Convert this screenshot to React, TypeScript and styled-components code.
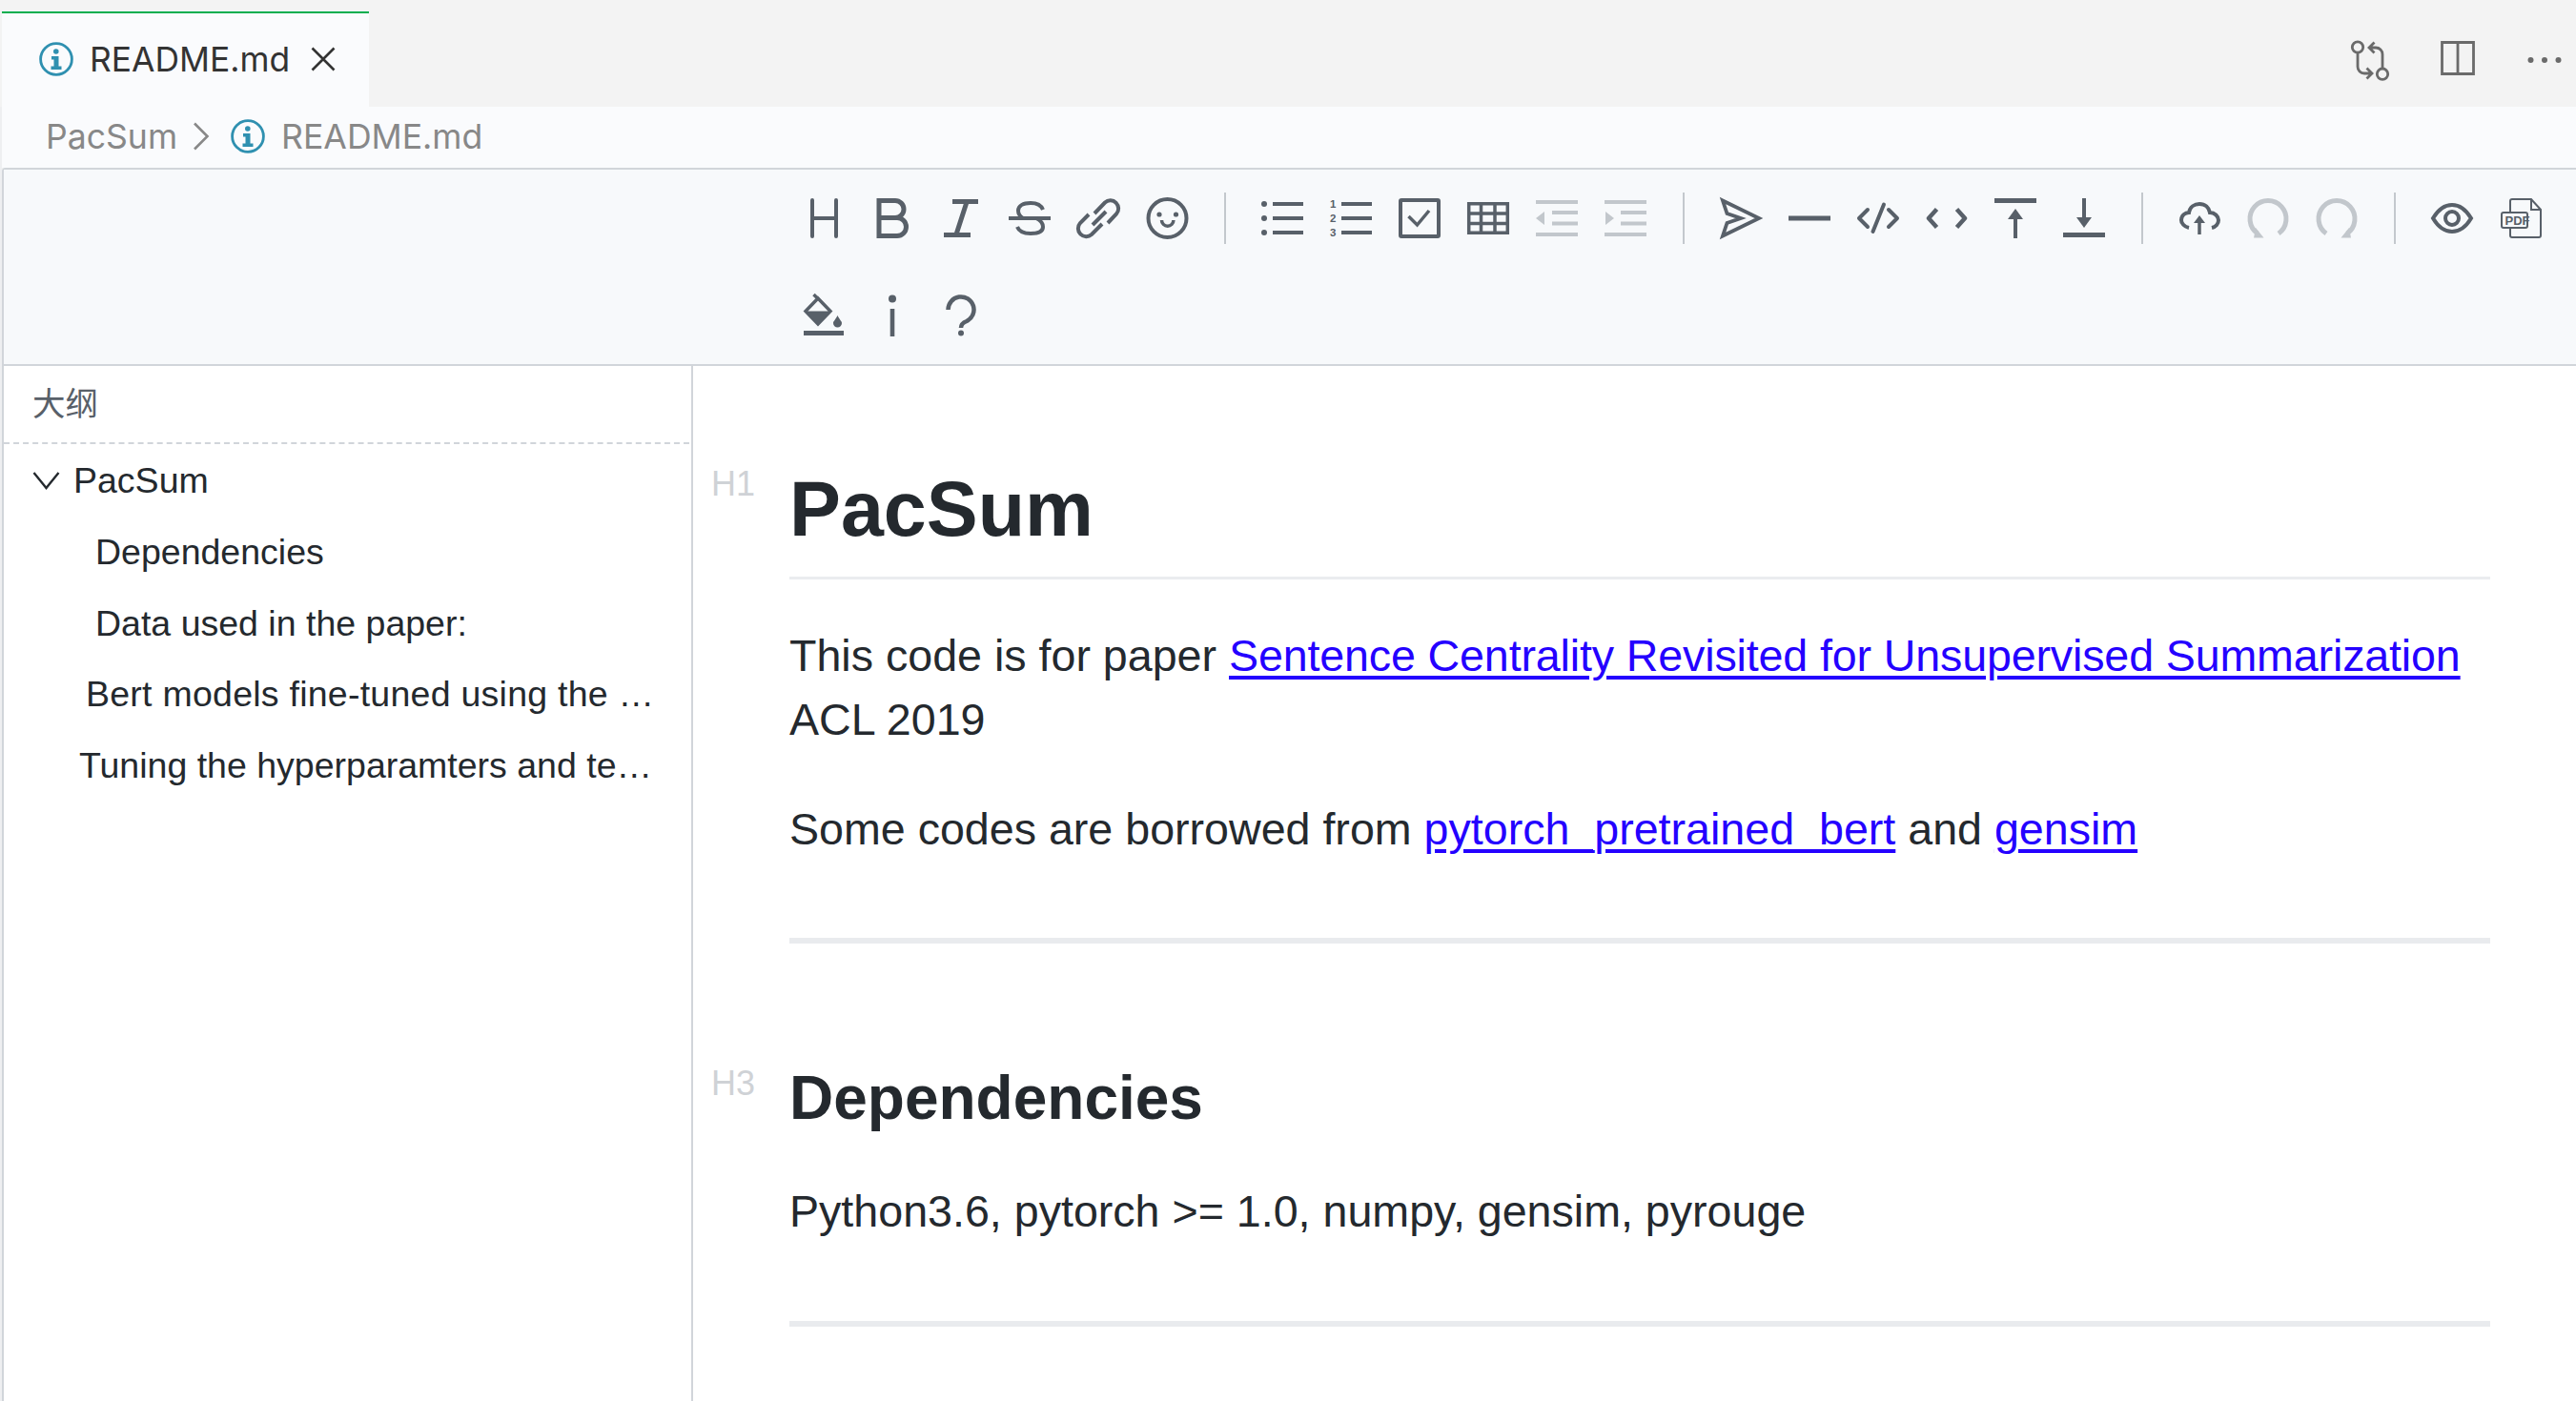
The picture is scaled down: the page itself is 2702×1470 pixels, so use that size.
import React from "react";
import styled, { createGlobalStyle } from "styled-components";

const Global = createGlobalStyle`
  html, body { margin: 0; padding: 0; width: 100%; height: 100%; overflow: hidden; background: #fff; }
  #root { height: 100%; }
  * { box-sizing: border-box; }
`;

const UI = `Inter, "Liberation Sans", sans-serif`;
const DOC = `"Liberation Sans", Arial, "Noto Sans CJK SC", sans-serif`;

const Page = styled.div`
  display: flex;
  flex-direction: column;
  height: 1470px;
  width: 2702px;
  overflow: hidden;
  background: #eeeff1;
`;
const TabBar = styled.header`
  height: 112px;
  flex: none;
  display: flex;
  justify-content: space-between;
  background: #f3f3f3;
  padding-left: 2px;
`;
const Tab = styled.div`
  width: 385px;
  margin-top: 12px;
  border-top: 2px solid #00ae4f;
  background: #fafbfd;
  display: flex;
  align-items: center;
  padding-left: 39px;
  padding-bottom: 2px;
  font: 400 35.4px ${UI};
  color: #333;
`;
const TabLabel = styled.span`
  margin-left: 17px;
`;
const TabClose = styled.svg`
  width: 26px;
  height: 26px;
  margin-left: 22px;
  color: #333;
`;
const Actions = styled.div`
  display: flex;
  align-items: center;
  gap: 47px;
  padding: 14px 11px 0 0;
  color: #6a6a6a;
`;
const ActionIcon = styled.svg`
  width: 44px;
  height: 44px;
`;
const Crumbs = styled.nav`
  height: 64px;
  flex: none;
  margin-left: 2px;
  background: #fafbfd;
  display: flex;
  align-items: center;
  padding-left: 46px;
  padding-bottom: 2px;
  font: 400 35.6px ${UI};
  color: #888;
`;
const CrumbChevron = styled.svg`
  width: 18px;
  height: 30px;
  margin: 0 22px 0 16px;
`;
const CrumbFile = styled.span`
  margin-left: 17px;
`;
const FileIcon = styled.svg`
  width: 36px;
  height: 36px;
  flex: none;
`;
const Editor = styled.main`
  flex: 1;
  min-height: 0;
  margin-left: 2px;
  display: flex;
  flex-direction: column;
  background: #fff;
  border-left: 2px solid #d1d5da;
  border-top: 2px solid #d1d5da;
  border-top-left-radius: 4px;
`;
const Toolbar = styled.div`
  height: 206px;
  flex: none;
  background: #f7f9fb;
  border-bottom: 2px solid #d1d5da;
  padding: 0 8px 0 824px;
  display: flex;
  flex-wrap: wrap;
  align-content: flex-start;
`;
const ToolButton = styled.div<{ $muted?: boolean }>`
  width: 72px;
  height: 101px;
  display: flex;
  align-items: center;
  justify-content: center;
  color: ${(p) => (p.$muted ? "#c2c7cc" : "#586069")};
`;
const ToolSeparator = styled.div`
  width: 2px;
  height: 54px;
  margin: 24px 23.5px;
  background: #c3c8cd;
`;
const Glyph = styled.svg`
  width: 44px;
  height: 44px;
  flex: none;
  overflow: visible;
`;
const Split = styled.div`
  flex: 1;
  min-height: 0;
  display: flex;
`;
const Outline = styled.aside`
  width: 723px;
  flex: none;
  border-right: 2px solid #d1d5da;
  font-family: ${DOC};
`;
const OutlineTitle = styled.div`
  height: 82px;
  margin-right: 2px;
  padding: 0 0 6px 30px;
  display: flex;
  align-items: center;
  border-bottom: 2px dashed #d1d5da;
  font: 400 34.5px "Noto Sans CJK SC", sans-serif;
  color: #586069;
`;
const OutlineList = styled.ul`
  margin: 0;
  padding: 1.5px 0 0;
  list-style: none;
  color: #24292e;
  font-size: 37.5px;
`;
const OutlineItem = styled.li<{ $indent: number; $stretch?: boolean }>`
  height: 74.5px;
  line-height: 74.5px;
  padding-left: ${(p) => p.$indent}px;
  padding-right: 37px;
  white-space: nowrap;
  overflow: hidden;
  text-overflow: ellipsis;
  letter-spacing: ${(p) => (p.$stretch ? "0.25px" : "0")};
`;
const OutlineRoot = styled.li`
  height: 74.5px;
  display: flex;
  align-items: center;
  padding-left: 30px;
`;
const OutlineCaret = styled.svg`
  width: 30px;
  height: 20px;
  margin-right: 13px;
  margin-top: -2px;
`;
const Preview = styled.article`
  flex: 1;
  min-width: 0;
  padding: 100px 90px 0 101px;
  background: #fff;
  color: #24292e;
  font: 400 46.6px/67px ${DOC};
`;
const Heading = styled.h1`
  position: relative;
  margin: 0 0 47px;
  padding-bottom: 21px;
  border-bottom: 3px solid #eaecef;
  font: 700 80.8px/100px ${DOC};
`;
const SubHeading = styled.h3`
  position: relative;
  margin: 122px 0 46px;
  font: 700 64px/80px ${DOC};
`;
const LevelTag = styled.span<{ $top: number }>`
  position: absolute;
  left: -82px;
  top: ${(p) => p.$top}px;
  font: 400 36px/40px ${DOC};
  color: #cfd2d6;
`;
const Para = styled.p`
  margin: 0 0 48px;
`;
const Link = styled.a<{ $tight?: boolean }>`
  color: #2400ff;
  text-decoration: underline;
  text-decoration-thickness: 4px;
  text-underline-offset: 5px;
  letter-spacing: ${(p) => (p.$tight ? "-0.14px" : "0")};
`;
const Rule = styled.hr<{ $gap: number }>`
  height: 6px;
  margin: ${(p) => p.$gap}px 0 0;
  border: 0;
  background: #e9ebee;
`;
const Para2 = styled(Para)`
  margin-bottom: 0;
`;

const s = { fill: "none", stroke: "currentColor" } as const;
const f = { fill: "currentColor" } as const;
const num = { fill: "currentColor", fontFamily: "Liberation Sans", fontWeight: 700, fontSize: 11.5 } as const;

const ListLines = () => (
  <g {...s} strokeWidth={4}>
    <path d="M12 7H44M12 22H44M12 37H44" />
  </g>
);

const icons: Record<string, React.ReactNode> = {
  h: <path {...s} strokeWidth={4} strokeLinecap="round" d="M10 3V41M35 3V41M10 22H35" />,
  b: <path {...s} strokeWidth={5} d="M8 3.5H25a9 9 0 0 1 0 18H8ZM8 21.5H27a9.5 9.5 0 0 1 0 19H8Z" />,
  i: <path {...s} strokeWidth={5} d="M13 4.5H40M4 39.5H32M28 5L17 39" />,
  s: (
    <g {...s} strokeWidth={4}>
      <path d="M0 22H44" />
      <path d="M36 13C34 8 29 6 23 6C15 6 10 9 10 14C10 17 12 20 15 22M29 22C33 24 36 27 36 31C36 36 30 38 23 38C16 38 11 36 9 31" />
    </g>
  ),
  link: (
    <g {...s} strokeWidth={4}>
      <path d="M18 17L29 5.5a8.5 8.5 0 0 1 12 12L32 27" />
      <path d="M26 28L15 39a8.5 8.5 0 0 1-12-12L12 18" />
      <path d="M16 29L30 15" />
    </g>
  ),
  emoji: (
    <g>
      <circle {...s} strokeWidth={4} cx="22.5" cy="22" r="20" />
      <circle {...f} cx="14" cy="18" r="2.6" />
      <circle {...f} cx="31.5" cy="18" r="2.6" />
      <path {...s} strokeWidth={3.5} d="M16.5 24a6.2 6.2 0 0 0 12.4 0" />
    </g>
  ),
  ul: (
    <g>
      <ListLines />
      <circle {...f} cx="3" cy="7" r="3" />
      <circle {...f} cx="3" cy="22" r="3" />
      <circle {...f} cx="3" cy="37" r="3" />
    </g>
  ),
  ol: (
    <g>
      <ListLines />
      <text {...num} x="0" y="11">1</text>
      <text {...num} x="0" y="26">2</text>
      <text {...num} x="0" y="41">3</text>
    </g>
  ),
  check: (
    <g {...s}>
      <rect strokeWidth={4} x="2" y="3" width="40" height="38" rx="1" />
      <path strokeWidth={3.5} d="M10.5 20L19.5 29L32 14" />
    </g>
  ),
  table: <path {...s} strokeWidth={3.5} d="M1.7 6.7H42.3V37.3H1.7ZM1.7 17H42.3M1.7 27.5H42.3M14.5 6.7V37.3M29 6.7V37.3" />,
  outdent: (
    <g>
      <path {...s} strokeWidth={4} d="M0 5H44M17 16H44M17 27.5H44M0 39H44" />
      <path {...f} d="M0 22L9 15V29Z" />
    </g>
  ),
  indent: (
    <g>
      <path {...s} strokeWidth={4} d="M0 5H44M17 16H44M17 27.5H44M0 39H44" />
      <path {...f} d="M10 22L1 15V29Z" />
    </g>
  ),
  quote: <path {...s} strokeWidth={3.8} d="M3 3.5L41 22L3 40.5L7.5 27L22 22L7.5 17Z" />,
  hr: <path {...s} strokeWidth={5} d="M0 22H44" />,
  code: <path {...s} strokeWidth={4} strokeLinecap="round" strokeLinejoin="round" d="M11 13L2 22L11 31M33 13L42 22L33 31M28 7.5L16.5 36" />,
  inline: <path {...s} strokeWidth={4.5} strokeLinejoin="round" d="M11.5 12.5L3 22L11.5 31.5M32.5 12.5L41 22L32.5 31.5" />,
  up: (
    <g>
      <path {...s} strokeWidth={5} d="M0 3.5H44" />
      <path {...s} strokeWidth={4} d="M22 21V43" />
      <path {...f} d="M22 12L30 23H14Z" />
    </g>
  ),
  down: (
    <g>
      <path {...s} strokeWidth={5} d="M0 39.5H44" />
      <path {...s} strokeWidth={4} d="M22 1V23" />
      <path {...f} d="M22 32L30 21H14Z" />
    </g>
  ),
  upload: (
    <g>
      <path {...s} strokeWidth={4} d="M11 32C6 31 3 27 3 24C3 19 7 16 11 16C12 10 17 7 22 7C28 7 32 11 33 16C38 16 42 20 42 24C42 28 39 31 35 32" />
      <path {...s} strokeWidth={3.5} d="M22 24V39" />
      <path {...f} d="M22 19L28 27H16Z" />
    </g>
  ),
  undo: (
    <g>
      <path {...s} strokeWidth={5} d="M33 38A19 19 0 1 0 11 38" />
      <path {...f} d="M9 32L17.5 42.5H7Z" />
    </g>
  ),
  redo: (
    <g>
      <path {...s} strokeWidth={5} d="M11 38A19 19 0 1 1 33 38" />
      <path {...f} d="M35 32L26.5 42.5H37Z" />
    </g>
  ),
  eye: (
    <g {...s} strokeWidth={4}>
      <path d="M2 22C8 12 15 8 22 8C29 8 36 12 42 22C36 32 29 36 22 36C15 36 8 32 2 22Z" />
      <circle cx="22" cy="22" r="7" />
    </g>
  ),
  pdf: (
    <g>
      <path {...s} strokeWidth={2} d="M11 15V4a2 2 0 0 1 2-2H33L43 13V40a2 2 0 0 1-2 2H13a2 2 0 0 1-2-2V33M33 2V13H43" />
      <rect {...s} fill="#f7f9fb" strokeWidth={2} x="2" y="16" width="27" height="16" rx="2" />
      <text fill="currentColor" fontFamily="Liberation Sans" fontSize="13" fontWeight="700" x="5.5" y="29">PDF</text>
    </g>
  ),
  fill: (
    <g>
      <path {...s} strokeWidth={3.5} d="M11.5 0L17 5.5M16 4L3 17.5L16 31L29 17.5Z" />
      <path {...f} d="M3 17.5H29L16 31Z" />
      <path {...f} d="M36.5 22C34 27 32 28 32 30a4.5 4.5 0 0 0 9 0C41 28 39 27 36.5 22Z" />
      <path {...s} strokeWidth={5} d="M1 40.5H43" />
    </g>
  ),
  info: (
    <g>
      <circle {...f} cx="22" cy="4.5" r="4" />
      <path {...s} strokeWidth={4.6} d="M22 15V44" />
    </g>
  ),
  help: (
    <g>
      <path {...s} strokeWidth={4.5} d="M8.5 16A13.5 13.5 0 1 1 28 28C24 29.5 22 31 22 35" />
      <circle {...f} cx="22" cy="40.5" r="3" />
    </g>
  ),
};

const Tool = ({ name, muted }: { name: string; muted?: boolean }) => (
  <ToolButton $muted={muted}>
    <Glyph viewBox="0 0 44 44">{icons[name]}</Glyph>
  </ToolButton>
);

const InfoGlyph = () => (
  <FileIcon viewBox="0 0 36 36" role="img" aria-label="info">
    <circle cx="18" cy="18" r="16.4" fill="none" stroke="#2f90b0" strokeWidth="2.8" />
    <circle cx="17.8" cy="10" r="2.8" fill="#2f90b0" />
    <path fill="#2f90b0" d="M13 15H20.5V25.5H23.5V29H12.5V25.5H15.5V18.5H13Z" />
  </FileIcon>
);

const Row1 = ["h", "b", "i", "s", "link", "emoji", "|", "ul", "ol", "check", "table", "outdent*", "indent*", "|", "quote", "hr", "code", "inline", "up", "down", "|", "upload", "undo*", "redo*", "|", "eye", "pdf", "fill", "info", "help"];

export default function App() {
  return (
    <Page>
      <Global />
      <TabBar>
        <Tab>
          <InfoGlyph />
          <TabLabel>README.md</TabLabel>
          <TabClose viewBox="0 0 26 26">
            <path fill="none" stroke="currentColor" strokeWidth="2.6" d="M1.5 1.5L24.5 24.5M24.5 1.5L1.5 24.5" />
          </TabClose>
        </Tab>
        <Actions>
          <ActionIcon viewBox="0 0 44 44">
            <g fill="none" stroke="currentColor" strokeWidth="2.8">
              <circle cx="8" cy="8.5" r="5.7" />
              <circle cx="34" cy="36.7" r="5.7" />
              <path d="M8 14V29a7 7 0 0 0 7 7H23M17.5 30.5L23 36L17.5 41.5" />
              <path d="M34 31V16a7 7 0 0 0-7-7H20M25.5 3.5L20 9L25.5 14.5" />
            </g>
          </ActionIcon>
          <ActionIcon viewBox="0 0 44 44">
            <path fill="none" stroke="currentColor" strokeWidth="2.8" d="M5.5 3.5H38.5V36.5H5.5ZM22 3.5V36.5" />
          </ActionIcon>
          <ActionIcon viewBox="0 0 44 44">
            <g fill="currentColor">
              <circle cx="7.5" cy="22" r="3" />
              <circle cx="22" cy="22" r="3" />
              <circle cx="36.5" cy="22" r="3" />
            </g>
          </ActionIcon>
        </Actions>
      </TabBar>
      <Crumbs>
        <span>PacSum</span>
        <CrumbChevron viewBox="0 0 18 30">
          <path fill="none" stroke="#888" strokeWidth="2.6" d="M2 1.5L15.5 15L2 28.5" />
        </CrumbChevron>
        <InfoGlyph />
        <CrumbFile>README.md</CrumbFile>
      </Crumbs>
      <Editor>
        <Toolbar>
          {Row1.map((n, i) =>
            n === "|" ? (
              <ToolSeparator key={i} />
            ) : (
              <Tool key={i} name={n.replace("*", "")} muted={n.endsWith("*")} />
            )
          )}
        </Toolbar>
        <Split>
          <Outline>
            <OutlineTitle>大纲</OutlineTitle>
            <OutlineList>
              <OutlineRoot>
                <OutlineCaret viewBox="0 0 30 20">
                  <path fill="none" stroke="#24292e" strokeWidth="2.4" d="M1.5 2L14.5 18L27.5 2" />
                </OutlineCaret>
                PacSum
              </OutlineRoot>
              <OutlineItem $indent={96}>Dependencies</OutlineItem>
              <OutlineItem $indent={96}>Data used in the paper:</OutlineItem>
              <OutlineItem $indent={86} $stretch>Bert models fine-tuned using the distant signal:</OutlineItem>
              <OutlineItem $indent={79}>Tuning the hyperparamters and testing on datasets</OutlineItem>
            </OutlineList>
          </Outline>
          <Preview>
            <Heading>
              <LevelTag $top={4}>H1</LevelTag>
              PacSum
            </Heading>
            <Para>
              This code is for paper{" "}
              <Link $tight href="#paper">Sentence Centrality Revisited for Unsupervised Summarization</Link>
              <br />
              ACL 2019
            </Para>
            <Para2>
              Some codes are borrowed from <Link href="#bert">pytorch_pretrained_bert</Link> and{" "}
              <Link href="#gensim">gensim</Link>
            </Para2>
            <Rule $gap={80} />
            <SubHeading>
              <LevelTag $top={5}>H3</LevelTag>
              Dependencies
            </SubHeading>
            <Para2>Python3.6, pytorch &gt;= 1.0, numpy, gensim, pyrouge</Para2>
            <Rule $gap={81} />
          </Preview>
        </Split>
      </Editor>
    </Page>
  );
}
